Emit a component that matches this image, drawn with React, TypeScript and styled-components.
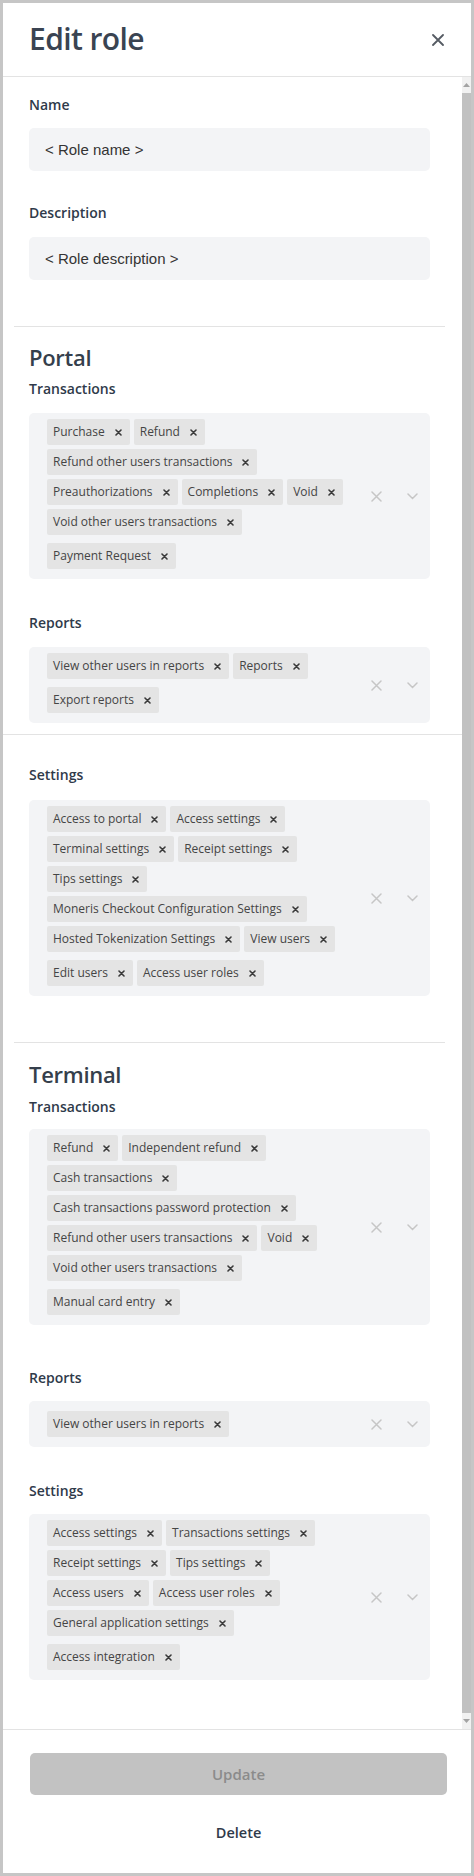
import styled, { createGlobalStyle } from "styled-components";

const GlobalStyle = createGlobalStyle`
  html, body {
    margin: 0;
    padding: 0;
    background: #ffffff;
  }
  * {
    box-sizing: border-box;
  }
`;

type Group = {
  label: string;
  top: number;
  gap: number;
  tags: string[];
};

type Section = {
  title: string;
  top: number;
  groups: Group[];
};

const portal: Section = {
  title: "Portal",
  top: 14,
  groups: [
    {
      label: "Transactions",
      top: 6,
      gap: 14,
      tags: [
        "Purchase",
        "Refund",
        "Refund other users transactions",
        "Preauthorizations",
        "Completions",
        "Void",
        "Void other users transactions",
        "Payment Request",
      ],
    },
    {
      label: "Reports",
      top: 34,
      gap: 14,
      tags: ["View other users in reports", "Reports", "Export reports"],
    },
  ],
};

const portalSettings: Group = {
  label: "Settings",
  top: 30,
  gap: 15,
  tags: [
    "Access to portal",
    "Access settings",
    "Terminal settings",
    "Receipt settings",
    "Tips settings",
    "Moneris Checkout Configuration Settings",
    "Hosted Tokenization Settings",
    "View users",
    "Edit users",
    "Access user roles",
  ],
};

const terminal: Section = {
  title: "Terminal",
  top: 15,
  groups: [
    {
      label: "Transactions",
      top: 7,
      gap: 12,
      tags: [
        "Refund",
        "Independent refund",
        "Cash transactions",
        "Cash transactions password protection",
        "Refund other users transactions",
        "Void",
        "Void other users transactions",
        "Manual card entry",
      ],
    },
    {
      label: "Reports",
      top: 43,
      gap: 13,
      tags: ["View other users in reports"],
    },
    {
      label: "Settings",
      top: 34,
      gap: 13,
      tags: [
        "Access settings",
        "Transactions settings",
        "Receipt settings",
        "Tips settings",
        "Access users",
        "Access user roles",
        "General application settings",
        "Access integration",
      ],
    },
  ],
};

const CloseIcon = () => (
  <svg width="12" height="12" viewBox="0 0 12 12">
    <path d="M1 1L11 11M11 1L1 11" stroke="#555b63" strokeWidth="1.8" strokeLinecap="round" />
  </svg>
);

const TagRemove = () => (
  <svg width="7" height="7" viewBox="0 0 7 7">
    <path d="M1 1L6 6M6 1L1 6" stroke="#3a3a3a" strokeWidth="1.6" strokeLinecap="round" />
  </svg>
);

const ClearIcon = () => (
  <svg width="11" height="11" viewBox="0 0 11 11">
    <path d="M1 1L10 10M10 1L1 10" stroke="#c6c6c6" strokeWidth="1.5" strokeLinecap="round" />
  </svg>
);

const Chevron = () => (
  <svg width="11" height="7" viewBox="0 0 11 7">
    <path d="M1 1L5.5 5.5L10 1" fill="none" stroke="#c6c6c6" strokeWidth="1.5" strokeLinecap="round" />
  </svg>
);

const Arrow = ({ down }: { down?: boolean }) => (
  <svg width="7" height="4" viewBox="0 0 7 4">
    <path d={down ? "M0 0L7 0L3.5 4Z" : "M0 4L7 4L3.5 0Z"} fill="#a3a3a3" />
  </svg>
);

const MultiSelect = ({ tags, gap }: { tags: string[]; gap: number }) => (
  <SelectBox $gap={gap}>
    <ValueList>
      {tags.map((t) => (
        <Tag key={t}>
          <TagText>{t}</TagText>
          <TagRemove />
        </Tag>
      ))}
      <InputSlot />
    </ValueList>
    <Indicators>
      <Indicator>
        <ClearIcon />
      </Indicator>
      <Indicator>
        <Chevron />
      </Indicator>
    </Indicators>
  </SelectBox>
);

const GroupField = ({ group }: { group: Group }) => (
  <>
    <Label $top={group.top}>{group.label}</Label>
    <MultiSelect tags={group.tags} gap={group.gap} />
  </>
);

const App = () => {
  return (
    <Frame>
      <GlobalStyle />
      <Header>
        <Title>Edit role</Title>
        <CloseButton>
          <CloseIcon />
        </CloseButton>
      </Header>
      <Body>
        <Content>
          <Label $top={18}>Name</Label>
          <TextInput $gap={13}>&lt; Role name &gt;</TextInput>
          <Label $top={32}>Description</Label>
          <TextInput $gap={14}>&lt; Role description &gt;</TextInput>

          <Divider $top={46} />
          <SectionTitle $top={portal.top}>{portal.title}</SectionTitle>
          {portal.groups.map((g) => (
            <GroupField key={g.label} group={g} />
          ))}
          <Divider $top={11} $full />
          <GroupField group={portalSettings} />

          <Divider $top={46} />
          <SectionTitle $top={terminal.top}>{terminal.title}</SectionTitle>
          {terminal.groups.map((g) => (
            <GroupField key={g.label} group={g} />
          ))}
        </Content>
        <Scrollbar>
          <ScrollArrow>
            <Arrow />
          </ScrollArrow>
          <Thumb />
          <ScrollArrow>
            <Arrow down />
          </ScrollArrow>
        </Scrollbar>
      </Body>
      <Footer>
        <UpdateButton disabled>Update</UpdateButton>
        <DeleteButton>Delete</DeleteButton>
      </Footer>
    </Frame>
  );
};

export default App;

const Frame = styled.div`
  display: flex;
  flex-direction: column;
  width: 474px;
  height: 1876px;
  border: 3px solid #c6c6c6;
  background: #ffffff;
  overflow: hidden;
  font-family: "Open Sans", "Noto Sans", sans-serif;
`;

const Header = styled.div`
  flex: none;
  height: 74px;
  display: flex;
  align-items: center;
  justify-content: space-between;
  padding: 0 27px 2px 26px;
  border-bottom: 1px solid #e3e3e3;
`;

const Title = styled.h1`
  margin: 0;
  font-size: 30px;
  line-height: 40px;
  font-weight: 600;
  color: #3a4452;
  letter-spacing: -0.6px;
`;

const CloseButton = styled.button`
  display: flex;
  align-items: center;
  justify-content: center;
  width: 12px;
  height: 12px;
  padding: 0;
  border: none;
  background: none;
  margin-top: 2px;
`;

const Body = styled.div`
  flex: 1;
  display: flex;
  min-height: 0;
`;

const Content = styled.div`
  flex: 1;
  display: flex;
  flex-direction: column;
  padding: 0 32px 0 26px;
  overflow: hidden;
`;

const Scrollbar = styled.div`
  flex: none;
  width: 9px;
  display: flex;
  flex-direction: column;
  background: #f1f1f1;
`;

const ScrollArrow = styled.div`
  flex: none;
  height: 16px;
  display: flex;
  align-items: center;
  justify-content: center;
`;

const Thumb = styled.div`
  flex: 1;
  background: #c1c1c1;
`;

const Label = styled.div<{ $top: number }>`
  margin-top: ${(p) => p.$top}px;
  font-size: 14px;
  line-height: 20px;
  font-weight: 600;
  color: #2f3a4a;
`;

const SectionTitle = styled.h2<{ $top: number }>`
  margin: ${(p) => p.$top}px 0 0;
  font-size: 22px;
  line-height: 32px;
  font-weight: 600;
  color: #353f4c;
  letter-spacing: -0.3px;
`;

const TextInput = styled.div<{ $gap: number }>`
  margin-top: ${(p) => p.$gap}px;
  height: 43px;
  display: flex;
  align-items: center;
  padding: 0 16px;
  border-radius: 5px;
  background: #f3f4f6;
  font-family: "Liberation Sans", Arial, sans-serif;
  font-size: 15px;
  color: #333333;
`;

const Divider = styled.div<{ $top: number; $full?: boolean }>`
  flex: none;
  height: 1px;
  margin: ${(p) => (p.$full ? `${p.$top}px -32px 0 -26px` : `${p.$top}px -15px 0 -15px`)};
  background: #e3e3e3;
`;

const SelectBox = styled.div<{ $gap: number }>`
  margin-top: ${(p) => p.$gap}px;
  display: flex;
  align-items: center;
  border-radius: 5px;
  background: #f3f4f6;
`;

const ValueList = styled.div`
  flex: 1;
  display: flex;
  flex-wrap: wrap;
  align-items: center;
  padding: 4px 2px 4px 16px;
`;

const Tag = styled.div`
  display: inline-flex;
  align-items: center;
  gap: 10px;
  height: 26px;
  margin: 2px;
  padding: 0 8px 0 6px;
  border-radius: 2px;
  background: #e4e4e4;
`;

const TagText = styled.span`
  font-size: 12px;
  line-height: 26px;
  color: #454545;
  white-space: nowrap;
`;

const InputSlot = styled.span`
  width: 2px;
  height: 38px;
  margin: 0 2px;
`;

const Indicators = styled.div`
  flex: none;
  display: flex;
`;

const Indicator = styled.div`
  width: 36px;
  height: 36px;
  display: flex;
  align-items: center;
  justify-content: center;
`;

const Footer = styled.div`
  flex: none;
  height: 144px;
  display: flex;
  flex-direction: column;
  align-items: stretch;
  padding: 23px 24px 0 27px;
  border-top: 1px solid #e3e3e3;
`;

const UpdateButton = styled.button`
  height: 42px;
  border: none;
  border-radius: 5px;
  background: #c2c2c2;
  font-family: "Open Sans", "Noto Sans", sans-serif;
  font-size: 15px;
  font-weight: 600;
  color: #8b8b8b;
`;

const DeleteButton = styled.button`
  margin-top: 27px;
  align-self: center;
  padding: 0;
  border: none;
  background: none;
  font-family: "Open Sans", "Noto Sans", sans-serif;
  font-size: 14.5px;
  line-height: 22px;
  font-weight: 600;
  color: #2f3a4a;
`;
